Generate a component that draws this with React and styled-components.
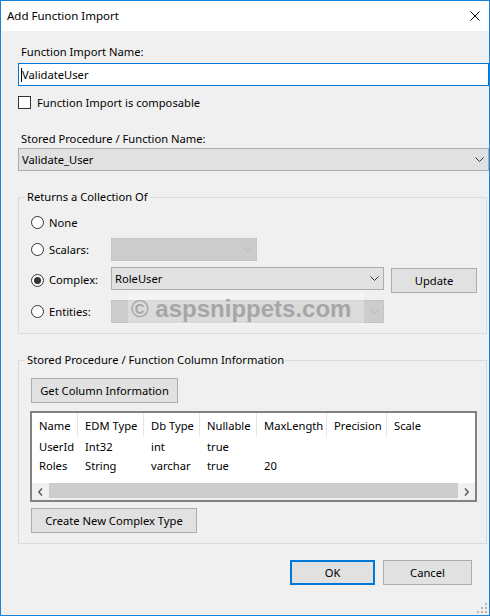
import React from "react";
import styled, { createGlobalStyle } from "styled-components";

const GlobalStyle = createGlobalStyle`
  html, body {
    margin: 0;
    padding: 0;
    background: #fff;
  }
  body {
    font-family: "Noto Sans", sans-serif;
    font-size: 11.2px;
    color: #000;
  }
`;

const Window = styled.div`
  position: relative;
  width: 490px;
  height: 616px;
  box-sizing: border-box;
  border: 1px solid #1883d7;
  background: #f0f0f0;
  display: flex;
  flex-direction: column;
`;

const TitleBar = styled.div`
  height: 30px;
  flex-shrink: 0;
  background: #fff;
  display: flex;
  align-items: center;
  justify-content: space-between;
  padding: 0 9px 0 6px;
`;

const Title = styled.span`
  font-size: 11.5px;
  line-height: 16px;
`;

const Body = styled.div`
  display: flex;
  flex-direction: column;
  align-items: flex-start;
  padding: 13px 0 0 17px;
`;

const FieldLabel = styled.div`
  margin-top: ${(p) => p.$mt || 0}px;
  margin-left: 3px;
  line-height: 16px;
`;

const TextBox = styled.div`
  margin-top: 3px;
  width: 471px;
  height: 23px;
  box-sizing: border-box;
  border: 1px solid #0078d7;
  background: #fff;
  display: flex;
  align-items: center;
  padding-left: 2px;
`;

const Caret = styled.span`
  width: 1px;
  height: 14px;
  background: #000;
`;

const CheckRow = styled.label`
  margin-top: 8px;
  height: 16px;
  display: flex;
  align-items: center;
  gap: 6px;
`;

const CheckBox = styled.span`
  width: 13px;
  height: 13px;
  box-sizing: border-box;
  border: 1px solid #333;
  background: #fff;
`;

const Combo = styled.div`
  margin-top: ${(p) => p.$mt || 0}px;
  width: ${(p) => p.$width}px;
  height: 23px;
  flex-shrink: 0;
  box-sizing: border-box;
  border: 1px solid ${(p) => (p.$disabled ? "#c4c4c4" : "#adadad")};
  background: ${(p) => (p.$disabled ? "#cccccc" : "#e1e1e1")};
  color: ${(p) => (p.$disabled ? "#6d6d6d" : "#000")};
  display: flex;
  align-items: center;
  justify-content: space-between;
  padding: 0 4px 0 3px;
`;

const Group = styled.fieldset`
  margin: ${(p) => p.$mt}px 0 0 0;
  width: 469px;
  min-width: 0;
  box-sizing: border-box;
  border: 1px solid #dcdcdc;
  padding: ${(p) => p.$pt}px 0 ${(p) => p.$pb}px 6px;
`;

const Legend = styled.legend`
  padding: 0 2px;
  line-height: 16px;
`;

const GroupContent = styled.div`
  display: flex;
  flex-direction: column;
  align-items: flex-start;
  padding-left: 6px;
`;

const ChoiceRow = styled.div`
  margin-top: ${(p) => p.$mt || 0}px;
  height: ${(p) => p.$h || 23}px;
  display: flex;
  align-items: flex-start;
`;

const Choice = styled.label`
  width: 80px;
  align-self: center;
  display: flex;
  align-items: center;
  gap: 5px;
  line-height: 16px;
`;

const Radio = styled.span`
  width: 13px;
  height: 13px;
  box-sizing: border-box;
  border-radius: 50%;
  border: 1px solid #333;
  background: #fff;
  display: flex;
  align-items: center;
  justify-content: center;

  &::after {
    content: "";
    width: 7px;
    height: 7px;
    border-radius: 50%;
    background: ${(p) => (p.$checked ? "#333" : "transparent")};
  }
`;

const Button = styled.button`
  margin: ${(p) => p.$m || "0"};
  width: ${(p) => p.$width}px;
  height: 25px;
  box-sizing: border-box;
  padding: 0;
  border: ${(p) => (p.$default ? "2px solid #0078d7" : "1px solid #adadad")};
  background: #e1e1e1;
  font: inherit;
  color: #000;
  line-height: 16px;
`;

const ListView = styled.div`
  margin: 8px 0 0 -1px;
  width: 447px;
  height: 91px;
  box-sizing: border-box;
  border: 2px solid #828282;
  background: #fff;
  display: flex;
  flex-direction: column;
`;

const COLUMNS = "46px 66px 56px 57px 70px 60px 1fr";

const GridRow = styled.div`
  display: grid;
  grid-template-columns: ${COLUMNS};
  height: ${(p) => p.$h}px;
`;

const HeaderCell = styled.div`
  display: flex;
  align-items: center;
  padding-left: 7px;
  border-right: 1px solid ${(p) => (p.$last ? "transparent" : "#e5e5e5")};
`;

const Cell = styled.div`
  display: flex;
  align-items: center;
  padding-left: 7px;
`;

const Spacer = styled.div`
  flex: 1;
`;

const HScroll = styled.div`
  height: 17px;
  background: #f0f0f0;
  display: flex;
  align-items: stretch;
`;

const ScrollArrow = styled.div`
  width: 17px;
  display: flex;
  align-items: center;
  justify-content: center;
`;

const ScrollThumb = styled.div`
  flex: 1;
  margin: 0 0 2px;
  background: #cdcdcd;
`;

const Footer = styled.div`
  align-self: stretch;
  margin-top: 16px;
  padding-right: 17px;
  display: flex;
  justify-content: flex-end;
  gap: 8px;
`;

const Watermark = styled.div`
  position: absolute;
  left: 127px;
  top: 292px;
  width: 236px;
  height: 31px;
  box-sizing: border-box;
  padding-left: 3px;
  background: rgba(255, 255, 255, 0.3);
  color: #a6a6a6;
  font-family: "Liberation Sans", Arial, sans-serif;
  font-weight: bold;
  font-size: 24px;
  line-height: 31px;
  white-space: nowrap;
`;

const Grip = styled.svg`
  position: absolute;
  right: 1px;
  bottom: 1px;
`;

function Chevron({ color = "#333" }) {
  return (
    <svg width="9" height="5" viewBox="0 0 9 5">
      <polyline points="0.5,0.5 4.5,4.5 8.5,0.5" fill="none" stroke={color} strokeWidth="1" />
    </svg>
  );
}

function ArrowGlyph({ dir }) {
  const pts = dir === "left" ? "4,0.5 0.8,4 4,7.5" : "1,0.5 4.2,4 1,7.5";
  return (
    <svg width="5" height="8" viewBox="0 0 5 8">
      <polyline points={pts} fill="none" stroke="#606060" strokeWidth="1.6" />
    </svg>
  );
}

const headers = ["Name", "EDM Type", "Db Type", "Nullable", "MaxLength", "Precision", "Scale"];
const rows = [
  ["UserId", "Int32", "int", "true", "", "", ""],
  ["Roles", "String", "varchar", "true", "20", "", ""],
];

export default function App() {
  return (
    <>
      <GlobalStyle />
      <Window>
        <TitleBar>
          <Title>Add Function Import</Title>
          <svg width="10" height="10" viewBox="0 0 10 10">
            <path d="M0.5 0.5 L9.5 9.5 M9.5 0.5 L0.5 9.5" stroke="#000" strokeWidth="1" />
          </svg>
        </TitleBar>

        <Body>
          <FieldLabel>Function Import Name:</FieldLabel>
          <TextBox>
            <Caret />
            ValidateUser
          </TextBox>

          <CheckRow>
            <CheckBox />
            Function Import is composable
          </CheckRow>

          <FieldLabel $mt={21}>Stored Procedure / Function Name:</FieldLabel>
          <Combo $mt={1} $width={471}>
            Validate_User
            <Chevron />
          </Combo>

          <Group $mt={18} $pt={6} $pb={10}>
            <Legend>Returns a Collection Of</Legend>
            <GroupContent>
              <ChoiceRow>
                <Choice>
                  <Radio />
                  None
                </Choice>
              </ChoiceRow>
              <ChoiceRow $mt={4}>
                <Choice>
                  <Radio />
                  Scalars:
                </Choice>
                <Combo $width={146} $disabled>
                  <span />
                  <Chevron color="#b5b5b5" />
                </Combo>
              </ChoiceRow>
              <ChoiceRow $mt={6} $h={26}>
                <Choice>
                  <Radio $checked />
                  Complex:
                </Choice>
                <Combo $width={273}>
                  RoleUser
                  <Chevron />
                </Combo>
                <Button $width={86} $m="1px 0 0 7px">
                  Update
                </Button>
              </ChoiceRow>
              <ChoiceRow $mt={7}>
                <Choice>
                  <Radio />
                  Entities:
                </Choice>
                <Combo $width={273} $disabled>
                  <span />
                  <Chevron color="#b5b5b5" />
                </Combo>
              </ChoiceRow>
            </GroupContent>
          </Group>

          <Group $mt={18} $pt={10} $pb={10}>
            <Legend>Stored Procedure / Function Column Information</Legend>
            <GroupContent>
              <Button $width={147}>Get Column Information</Button>

              <ListView>
                <GridRow $h={24}>
                  {headers.map((h, i) => (
                    <HeaderCell key={h} $last={i === headers.length - 1}>
                      {h}
                    </HeaderCell>
                  ))}
                </GridRow>
                {rows.map((r) => (
                  <GridRow key={r[0]} $h={19}>
                    {r.map((v, i) => (
                      <Cell key={i}>{v}</Cell>
                    ))}
                  </GridRow>
                ))}
                <Spacer />
                <HScroll>
                  <ScrollArrow>
                    <ArrowGlyph dir="left" />
                  </ScrollArrow>
                  <ScrollThumb />
                  <ScrollArrow>
                    <ArrowGlyph dir="right" />
                  </ScrollArrow>
                </HScroll>
              </ListView>

              <Button $width={166} $m="6px 0 0 0">
                Create New Complex Type
              </Button>
            </GroupContent>
          </Group>

          <Footer>
            <Button $width={85} $default>
              OK
            </Button>
            <Button $width={89}>Cancel</Button>
          </Footer>
        </Body>

        <Watermark>© aspsnippets.com</Watermark>

        <Grip width="12" height="12" viewBox="0 0 12 12">
          {[
            [8, 0],
            [4, 4],
            [8, 4],
            [0, 8],
            [4, 8],
            [8, 8],
          ].map(([x, y]) => (
            <rect key={`${x}-${y}`} x={x + 1} y={y + 1} width="2" height="2" fill="#b8b8b8" />
          ))}
        </Grip>
      </Window>
    </>
  );
}
